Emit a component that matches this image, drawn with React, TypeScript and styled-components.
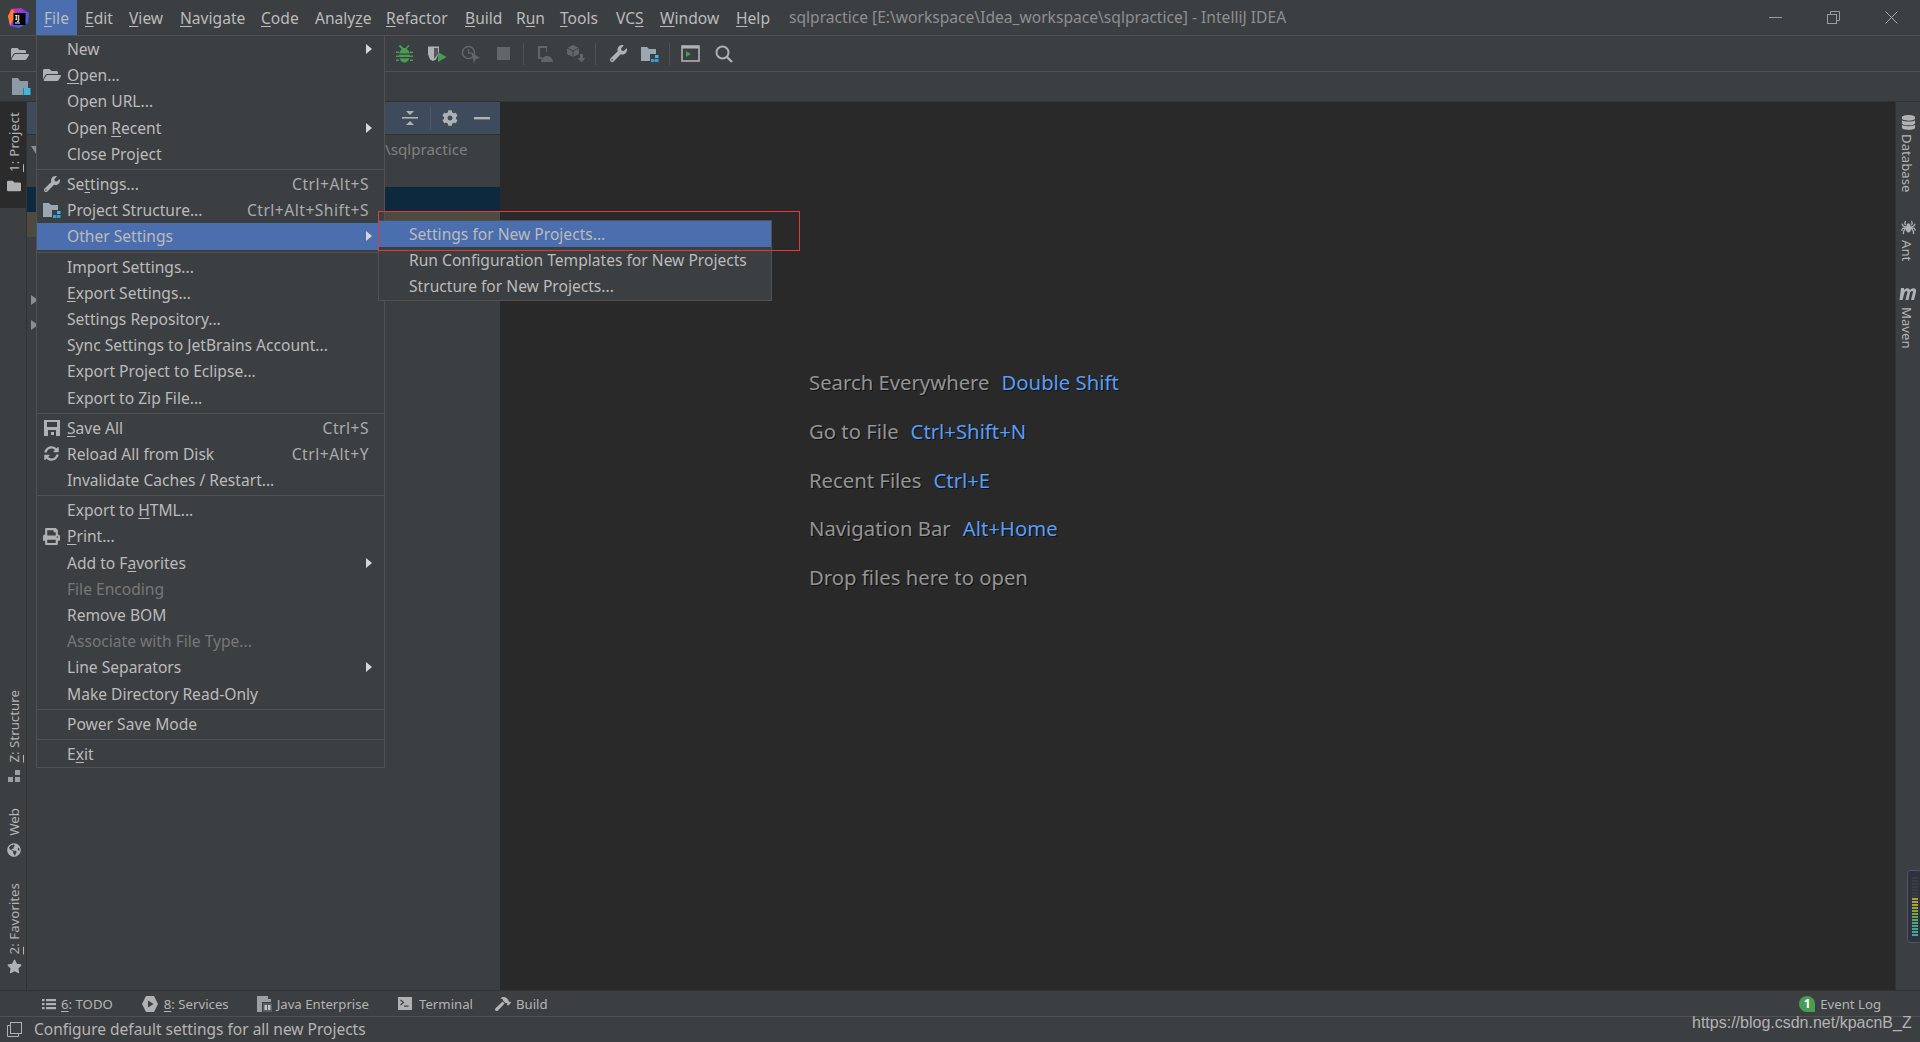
import React from "react";
import styled, { createGlobalStyle } from "styled-components";
import { FaCog, FaDatabase, FaFolder, FaFolderOpen, FaGlobeAmericas, FaHammer, FaPrint, FaStar, FaSyncAlt, FaWrench, FaSpider } from "react-icons/fa";

const Global = createGlobalStyle`
  html, body { margin: 0; padding: 0; background: #3c3f41; overflow: hidden; }
  body { font-family: "Noto Sans", "Open Sans", sans-serif; }
  u { text-underline-offset: 2px; text-decoration-thickness: 1px; }
`;

const Page = styled.div`
  position: relative;
  width: 1920px;
  height: 1042px;
  display: flex;
  flex-direction: column;
  background: #3c3f41;
  color: #bbbbbb;
  overflow: hidden;
`;

const TitleBar = styled.div`
  height: 35px;
  flex: none;
  display: flex;
  align-items: stretch;
  border-bottom: 1px solid #515151;
`;
const LogoSlot = styled.div`
  width: 36px;
  flex: none;
  display: flex;
  align-items: center;
  padding-left: 8px;
  box-sizing: border-box;
`;
const MainMenuItem = styled.div<{ $w: number; $active?: boolean }>`
  width: ${(p) => p.$w}px;
  flex: none;
  box-sizing: border-box;
  padding-left: 8px;
  font-size: 15.6px;
  line-height: 36px;
  white-space: nowrap;
  background: ${(p) => (p.$active ? "#4b6eaf" : "transparent")};
`;
const WindowTitle = styled.div`
  margin-left: 5px;
  font-size: 15.6px;
  line-height: 35px;
  color: #8d8f91;
  white-space: nowrap;
`;
const WindowControls = styled.div`
  margin-left: auto;
  display: flex;
`;
const WindowButton = styled.div`
  width: 58px;
  display: flex;
  align-items: center;
  justify-content: center;
`;

const Toolbar = styled.div`
  height: 35px;
  flex: none;
  display: flex;
  align-items: center;
  border-bottom: 1px solid #515151;
  padding-left: 8px;
`;
const ToolButton = styled.div<{ $w?: number }>`
  width: ${(p) => p.$w ?? 32}px;
  height: 26px;
  flex: none;
  display: flex;
  align-items: center;
  justify-content: center;
  color: #afb1b3;
`;
const ToolSep = styled.div<{ $ml: number; $mr: number }>`
  width: 1px;
  height: 22px;
  background: #515151;
  margin: 0 ${(p) => p.$mr}px 0 ${(p) => p.$ml}px;
`;
const ToolSpacer = styled.div`
  width: 356px;
  flex: none;
`;

const NavBar = styled.div`
  height: 29px;
  flex: none;
  display: flex;
  align-items: center;
  padding-left: 12px;
  border-bottom: 1px solid #323232;
`;

const Main = styled.div`
  flex: 1;
  min-height: 0;
  display: flex;
`;
const LeftStripe = styled.div`
  width: 26px;
  flex: none;
  display: flex;
  flex-direction: column;
  justify-content: space-between;
  border-right: 1px solid #323232;
  padding-bottom: 16px;
`;
const StripeGroup = styled.div`
  display: flex;
  flex-direction: column;
`;
const LeftTab = styled.div<{ $active?: boolean; $mt?: number; $gap?: number }>`
  display: flex;
  flex-direction: column;
  align-items: center;
  gap: ${(p) => p.$gap ?? 7}px;
  margin-top: ${(p) => p.$mt ?? 0}px;
  padding: ${(p) => (p.$active ? "10px 0 15px 2px" : "0 0 0 2px")};
  background: ${(p) => (p.$active ? "#2b2b2b" : "transparent")};
  color: #afb1b3;
`;
const VerticalLeft = styled.span<{ $spread?: boolean }>`
  writing-mode: vertical-rl;
  transform: rotate(180deg);
  font-size: 13.3px;
  line-height: 17px;
  letter-spacing: ${(p) => (p.$spread ? "0.2px" : "0")};
  color: #b4b4b4;
  white-space: nowrap;
`;

const ProjectPanel = styled.div`
  width: 473px;
  flex: none;
  display: flex;
  flex-direction: column;
`;
const PanelHeader = styled.div`
  height: 33px;
  flex: none;
  background: #3d4b5c;
  border-bottom: 1px solid #323232;
  box-sizing: border-box;
  display: flex;
  align-items: center;
  justify-content: flex-end;
  padding-right: 2px;
  margin-bottom: 2px;
  color: #afb1b3;
`;
const HeaderButton = styled.div<{ $w: number }>`
  width: ${(p) => p.$w}px;
  display: flex;
  justify-content: center;
`;
const HeaderSep = styled.div`
  width: 1px;
  height: 24px;
  background: #4d5a6a;
  margin: 0 3px;
`;
const TreeRow = styled.div<{ $tone?: "selected" | "recent" }>`
  height: 25px;
  flex: none;
  display: flex;
  align-items: center;
  padding-left: 4px;
  font-size: 15.2px;
  color: #808080;
  background: ${(p) => (p.$tone === "selected" ? "#0d293e" : p.$tone === "recent" ? "#4e4a3f" : "transparent")};
`;
const TreeText = styled.span`
  margin: -1px 0 0 344px;
  white-space: nowrap;
`;
const Caret = styled.span<{ $down?: boolean }>`
  width: 0;
  height: 0;
  flex: none;
  ${(p) =>
    p.$down
      ? "border-left: 5px solid transparent; border-right: 5px solid transparent; border-top: 8px solid #8c8f91;"
      : "border-top: 5px solid transparent; border-bottom: 5px solid transparent; border-left: 7px solid #8c8f91;"}
`;

const Editor = styled.div`
  flex: 1;
  min-width: 0;
  background: #292929;
  padding: 265px 0 0 309px;
  box-sizing: border-box;
  border-right: 1px solid #323232;
`;
const HintRow = styled.div`
  height: 48.8px;
  font-size: 20.3px;
  line-height: 30px;
  color: #949494;
  text-shadow: 1px 1px 0 #111;
  white-space: nowrap;
`;
const HintKey = styled.span`
  color: #589df6;
  margin-left: 12px;
`;

const RightStripe = styled.div`
  width: 24px;
  flex: none;
  display: flex;
  flex-direction: column;
  align-items: center;
  padding-top: 13px;
`;
const RightTab = styled.div<{ $mt?: number; $gap: number }>`
  display: flex;
  flex-direction: column;
  align-items: center;
  gap: ${(p) => p.$gap}px;
  margin-top: ${(p) => p.$mt ?? 0}px;
  color: #afb1b3;
`;
const VerticalRight = styled.span`
  writing-mode: vertical-rl;
  font-size: 13.2px;
  line-height: 17px;
  margin-right: 3px;
  color: #b4b4b4;
  white-space: nowrap;
`;
const MemoryIndicator = styled.div`
  margin-top: auto;
  margin-bottom: 47px;
  align-self: flex-end;
  line-height: 0;
`;

const BottomStripe = styled.div`
  height: 27px;
  flex: none;
  box-sizing: border-box;
  border-top: 1px solid #323232;
  border-bottom: 1px solid #515151;
  display: flex;
  align-items: center;
  position: relative;
`;
const BottomTab = styled.div<{ $x: number; $gap: number }>`
  margin-left: ${(p) => p.$x}px;
  display: flex;
  align-items: center;
  gap: ${(p) => p.$gap}px;
  font-size: 13.2px;
  color: #b4b4b4;
  white-space: nowrap;
`;
const EventLog = styled.div`
  margin-left: auto;
  margin-right: 39px;
  display: flex;
  align-items: center;
  gap: 5px;
  font-size: 13.2px;
  color: #b4b4b4;
`;
const Badge = styled.span`
  width: 16px;
  height: 16px;
  border-radius: 50% 50% 0 50%;
  background: #499c54;
  color: #fff;
  font-size: 12px;
  font-weight: 700;
  display: flex;
  align-items: center;
  justify-content: center;
`;

const StatusBar = styled.div`
  height: 24px;
  padding-bottom: 1px;
  flex: none;
  display: flex;
  align-items: center;
  padding-left: 7px;
  gap: 12px;
  font-size: 15.5px;
  color: #b4b4b4;
`;
const Watermark = styled.div`
  position: absolute;
  left: 1692px;
  top: 1013px;
  font-family: "Liberation Sans", Arial, sans-serif;
  font-size: 16px;
  line-height: 20px;
  color: #b3b3b3;
  white-space: nowrap;
`;

const Menu = styled.div<{ $x: number; $y: number; $w: number }>`
  position: absolute;
  left: ${(p) => p.$x}px;
  top: ${(p) => p.$y}px;
  width: ${(p) => p.$w}px;
  box-sizing: border-box;
  background: #3c3f41;
  border: 1px solid #515151;
  border-top-width: 0;
  z-index: 2;
`;
const SubMenu = styled(Menu)`
  border-width: 1px;
  z-index: 3;
`;
const MenuRow = styled.div<{ $active?: boolean; $disabled?: boolean; $indent: number }>`
  height: 26.2px;
  box-sizing: border-box;
  display: flex;
  align-items: center;
  position: relative;
  padding: 0 12px 0 ${(p) => p.$indent}px;
  font-size: 15.6px;
  color: ${(p) => (p.$disabled ? "#777777" : "#bbbbbb")};
  background: ${(p) => (p.$active ? "#4b6eaf" : "transparent")};
  white-space: nowrap;
`;
const RowIcon = styled.span`
  position: absolute;
  left: 5.5px;
  top: 50%;
  transform: translateY(-50%);
  width: 18px;
  height: 18px;
  display: flex;
  align-items: center;
  justify-content: center;
  color: #afb1b3;
`;
const Shortcut = styled.span`
  margin-left: auto;
  margin-right: 3px;
  letter-spacing: 0.5px;
  color: #a9acae;
`;
const SubArrow = styled.span`
  margin-left: auto;
  width: 0;
  height: 0;
  border-top: 5.5px solid transparent;
  border-bottom: 5.5px solid transparent;
  border-left: 6px solid #d6d6d6;
`;
const MenuSep = styled.div`
  height: 2px;
  border-bottom: 1px solid #515151;
  margin-bottom: 1px;
`;
const RedMark = styled.div`
  position: absolute;
  left: 378px;
  top: 211px;
  width: 422px;
  height: 40px;
  box-sizing: border-box;
  border: 1px solid #e5383b;
  z-index: 4;
`;

const Logo = () => (
  <svg width="21" height="20" viewBox="0 0 21 20">
    <defs>
      <linearGradient id="lg" x1="0" y1="0" x2="1" y2="1">
        <stop offset="0" stopColor="#fc318c" />
        <stop offset="0.5" stopColor="#7b3fe0" />
        <stop offset="1" stopColor="#087cfa" />
      </linearGradient>
    </defs>
    <path d="M3 1 L13 0 L21 5 L20 15 L11 20 L2 18 L0 8 Z" fill="url(#lg)" />
    <path d="M0 8 L4 1 L8 6 L2 18 Z" fill="#fe7f2d" />
    <rect x="5.500" y="5" width="12" height="12" fill="#000" />
    <text x="7" y="11.500" fontSize="6.5" fontWeight="700" fill="#fff" fontFamily="Noto Sans">IJ</text>
    <rect x="7" y="14.500" width="5" height="1" fill="#fff" />
  </svg>
);
const ProjectStructure = () => (
  <svg width="18" height="16" viewBox="0 0 18 16">
    <path d="M0 1h6l2 2h7v5H9v7H0z" fill="#9aa7b0" />
    <rect x="14" y="9" width="3.500" height="3" fill="#40b6e0" />
    <rect x="10" y="13" width="3.500" height="3" fill="#389fd6" />
    <rect x="14" y="13" width="3.500" height="3" fill="#389fd6" />
  </svg>
);
const ModuleFolder = () => (
  <svg width="19" height="17" viewBox="0 0 19 17">
    <path d="M0 0h6l2 3h8v7h-5v7H0z" fill="#8a9aa6" />
    <rect x="11.500" y="10" width="7" height="7" fill="#40b6e0" />
  </svg>
);
const BugIcon = () => (
  <svg width="17" height="18" viewBox="0 0 17 18" fill="#499c54">
    <ellipse cx="8.500" cy="10.500" rx="5.500" ry="7" />
    <path d="M4.500 0l3 3h2l3-3 1 1-3 3v2h-5V4l-3-3z" />
    <path d="M0 6.500h3V8H0zM14 6.500h3V8h-3zM0 10.500h3V12H0zM14 10.500h3V12h-3zM0 14.500h3V16H0zM14 14.500h3V16h-3z" />
    <rect x="3" y="8.500" width="11" height="1.300" fill="#3c3f41" />
    <rect x="3" y="12" width="11" height="1.300" fill="#3c3f41" />
  </svg>
);
const CoverageIcon = () => (
  <svg width="19" height="18" viewBox="0 0 19 18">
    <path d="M0 1.500h11v6l-3 7-3 1.500-3-1.500-2-5z" fill="#afb1b3" />
    <path d="M6 3h4v6l-4 5z" fill="#55585a" />
    <path d="M10 7l8.500 5-8.500 5z" fill="#499c54" />
  </svg>
);
const ProfilerIcon = () => (
  <svg width="20" height="18" viewBox="0 0 20 18" fill="none">
    <circle cx="7.5" cy="7.5" r="6" stroke="#636668" strokeWidth="1.6" />
    <path d="M7.5 4v4h3" stroke="#636668" strokeWidth="1.4" />
    <path d="M10 7l9 6-4 1-2 4z" fill="#636668" />
  </svg>
);
const BuildDim = () => (
  <svg width="18" height="18" viewBox="0 0 18 18" fill="none">
    <path d="M2 1h9v6H10V3H4v9h2v2H2z" fill="#636668" />
    <path d="M5 17c.5-4 3-6 6-6s5.500 2 6 6z" fill="#636668" />
  </svg>
);
const CubeDim = () => (
  <svg width="20" height="18" viewBox="0 0 20 18">
    <path d="M7 0l6 3v6l-6 3-6-3V3z" fill="#636668" />
    <path d="M7 6v6M1 3l6 3 6-3" stroke="#3c3f41" strokeWidth="1" fill="none" />
    <path d="M14 9h3v4h2.500l-4 4.500-4-4.500H14z" fill="#636668" />
  </svg>
);
const RunAnything = () => (
  <svg width="19" height="17" viewBox="0 0 19 17" fill="none">
    <rect x="1" y="1" width="17" height="15" stroke="#afb1b3" strokeWidth="1.6" />
    <rect x="1" y="1" width="17" height="2.500" fill="#afb1b3" />
    <path d="M5 6l5 3-5 3z" fill="#499c54" />
  </svg>
);
const SearchIcon = () => (
  <svg width="18" height="18" viewBox="0 0 18 18" fill="none" stroke="#afb1b3">
    <circle cx="7.500" cy="7.500" r="6" strokeWidth="2" />
    <path d="M11.500 11.500l5.500 5.500" strokeWidth="2.400" />
  </svg>
);
const SaveIcon = () => (
  <svg width="16" height="16" viewBox="0 0 16 16">
    <rect width="16" height="16" fill="#afb1b3" />
    <rect x="3" y="2" width="10" height="5" fill="#3c3f41" />
    <rect x="4" y="10" width="8" height="6" fill="#3c3f41" />
    <rect x="7" y="12" width="3" height="3" fill="#afb1b3" />
  </svg>
);
const CollapseIcon = () => (
  <svg width="16" height="16" viewBox="0 0 16 16">
    <path d="M4 1h8l-4 4z" fill="#afb1b3" />
    <rect x="0" y="7" width="16" height="1.600" fill="#afb1b3" />
    <path d="M8 11l4 4H4z" fill="#afb1b3" />
  </svg>
);
const MinusIcon = () => (
  <svg width="16" height="3" viewBox="0 0 16 3"><rect width="16" height="2.400" fill="#afb1b3" /></svg>
);
const WinMin = () => (
  <svg width="13" height="2" viewBox="0 0 13 2"><rect width="13" height="1" fill="#9a9c9e" /></svg>
);
const WinRestore = () => (
  <svg width="13" height="13" viewBox="0 0 13 13" fill="none" stroke="#9a9c9e">
    <rect x="0.500" y="3.500" width="9" height="9" />
    <path d="M3.500 3.500v-3h9v9h-3" />
  </svg>
);
const WinClose = () => (
  <svg width="13" height="13" viewBox="0 0 13 13" stroke="#a5a7a9"><path d="M0.500 0.500l12 12M12.500 0.500l-12 12" /></svg>
);
const TodoIcon = () => (
  <svg width="14" height="12" viewBox="0 0 14 12" fill="#afb1b3">
    <rect y="1" width="2.500" height="2.200" /><rect x="4" y="1" width="10" height="2.200" />
    <rect y="5" width="2.500" height="2.200" /><rect x="4" y="5" width="10" height="2.200" />
    <rect y="9" width="2.500" height="2.200" /><rect x="4" y="9" width="10" height="2.200" />
  </svg>
);
const ServicesIcon = () => (
  <svg width="16" height="16" viewBox="0 0 16 16">
    <path d="M4 0h8l4 8-4 8H4L0 8z" fill="#afb1b3" />
    <path d="M6 4.500l5.500 3.500L6 11.500z" fill="#3c3f41" />
  </svg>
);
const JavaEEIcon = () => (
  <svg width="15" height="16" viewBox="0 0 15 16">
    <path d="M0 0h11v3h3v3H5v10H0z" fill="#9da0a2" />
    <rect x="6" y="7" width="9" height="9" fill="#5a5d5f" />
    <rect x="7.500" y="9" width="2.500" height="5" fill="#c0c2c4" /><rect x="11" y="9" width="2.500" height="5" fill="#c0c2c4" />
  </svg>
);
const TerminalIcon = () => (
  <svg width="14" height="13" viewBox="0 0 14 13">
    <rect width="14" height="13" fill="#afb1b3" />
    <path d="M2.500 3l3 2.500-3 2.500" stroke="#3c3f41" strokeWidth="1.200" fill="none" />
    <rect x="6" y="8.500" width="4.500" height="1.200" fill="#3c3f41" />
  </svg>
);
const StructureIcon = () => (
  <svg width="12" height="12" viewBox="0 0 12 12" fill="#9da0a2">
    <rect x="7" y="0" width="5" height="5" /><rect x="0" y="7" width="5" height="5" /><rect x="7" y="7" width="5" height="5" />
  </svg>
);
const MavenIcon = () => (
  <svg width="18" height="12" viewBox="0 0 18 12" fill="#afb1b3">
    <path d="M2 0h3v2c2-2.500 5-2.500 6 0 2-2.500 7-2.500 6 2l-2 8h-3l2-8c0-1.500-2-1-3 .5L9.500 12h-3l2-8c0-1.500-2-1-3 .5L3.500 12h-3z" />
  </svg>
);
const StatusToggle = () => (
  <svg width="15" height="15" viewBox="0 0 15 15" fill="none" stroke="#afb1b3">
    <rect x="3.500" y="0.500" width="11" height="11" />
    <path d="M3.500 3.500H0.500v11h11v-3" />
  </svg>
);
const Memory = () => {
  const dark = Array.from({ length: 7 }, () => "#3a3d40");
  const lit = ["#b89b2e","#b2a02f","#a8a431","#9aa535","#8ba43b","#7aa545","#66a552","#58a762","#4fa773","#47a784","#44a894","#44a894","#3fa89c"];
  return (
    <svg width="13" height="73" viewBox="0 0 13 73">
      <rect x="0.500" y="0.500" width="14" height="72" rx="3" fill="#2d3140" stroke="#50566a" />
      {[...dark, ...lit].map((c, i) => (
        <rect key={i} x="5" y={7 + i * 3} width="6" height="2" fill={c} />
      ))}
    </svg>
  );
};

type Row =
  | { sep: true }
  | { label: React.ReactNode; icon?: React.ReactNode; shortcut?: string; sub?: boolean; active?: boolean; disabled?: boolean };

const fileMenu: Row[] = [
  { label: "New", sub: true },
  { label: <><u>O</u>pen...</>, icon: <FaFolderOpen size={18} /> },
  { label: "Open URL..." },
  { label: <>Open <u>R</u>ecent</>, sub: true },
  { label: "Close Project" },
  { sep: true },
  { label: <>Se<u>t</u>tings...</>, icon: <FaWrench size={16} />, shortcut: "Ctrl+Alt+S" },
  { label: "Project Structure...", icon: <ProjectStructure />, shortcut: "Ctrl+Alt+Shift+S" },
  { label: "Other Settings", sub: true, active: true },
  { sep: true },
  { label: "Import Settings..." },
  { label: <><u>E</u>xport Settings...</> },
  { label: "Settings Repository..." },
  { label: "Sync Settings to JetBrains Account..." },
  { label: "Export Project to Eclipse..." },
  { label: "Export to Zip File..." },
  { sep: true },
  { label: <><u>S</u>ave All</>, icon: <SaveIcon />, shortcut: "Ctrl+S" },
  { label: "Reload All from Disk", icon: <FaSyncAlt size={15} />, shortcut: "Ctrl+Alt+Y" },
  { label: "Invalidate Caches / Restart..." },
  { sep: true },
  { label: <>Export to <u>H</u>TML...</> },
  { label: <><u>P</u>rint...</>, icon: <FaPrint size={17} /> },
  { label: <>Add to F<u>a</u>vorites</>, sub: true },
  { label: "File Encoding", disabled: true },
  { label: "Remove BOM" },
  { label: "Associate with File Type...", disabled: true },
  { label: "Line Separators", sub: true },
  { label: "Make Directory Read-Only" },
  { sep: true },
  { label: "Power Save Mode" },
  { sep: true },
  { label: <>E<u>x</u>it</> },
];

const subMenu: Row[] = [
  { label: "Settings for New Projects...", active: true },
  { label: "Run Configuration Templates for New Projects" },
  { label: "Structure for New Projects..." },
];

const mainMenu: [React.ReactNode, number][] = [
  [<><u>F</u>ile</>, 41],
  [<><u>E</u>dit</>, 44],
  [<><u>V</u>iew</>, 51],
  [<><u>N</u>avigate</>, 81],
  [<><u>C</u>ode</>, 54],
  [<>Analy<u>z</u>e</>, 71],
  [<><u>R</u>efactor</>, 79],
  [<><u>B</u>uild</>, 51],
  [<>R<u>u</u>n</>, 44],
  [<><u>T</u>ools</>, 56],
  [<>VC<u>S</u></>, 44],
  [<><u>W</u>indow</>, 76],
  [<><u>H</u>elp</>, 56],
];

const renderRows = (rows: Row[], indent: number) =>
  rows.map((r, i) =>
    "sep" in r ? (
      <MenuSep key={i} />
    ) : (
      <MenuRow key={i} $active={r.active} $disabled={r.disabled} $indent={indent}>
        {r.icon && <RowIcon>{r.icon}</RowIcon>}
        <span>{r.label}</span>
        {r.shortcut && <Shortcut>{r.shortcut}</Shortcut>}
        {r.sub && <SubArrow />}
      </MenuRow>
    )
  );

const hints: [string, string | null][] = [
  ["Search Everywhere", "Double Shift"],
  ["Go to File", "Ctrl+Shift+N"],
  ["Recent Files", "Ctrl+E"],
  ["Navigation Bar", "Alt+Home"],
  ["Drop files here to open", null],
];

export default function App() {
  return (
    <Page>
      <Global />
      <TitleBar>
        <LogoSlot><Logo /></LogoSlot>
        {mainMenu.map(([label, w], i) => (
          <MainMenuItem key={i} $w={w} $active={i === 0}>{label}</MainMenuItem>
        ))}
        <WindowTitle>sqlpractice [E:\workspace\Idea_workspace\sqlpractice] - IntelliJ IDEA</WindowTitle>
        <WindowControls>
          <WindowButton><WinMin /></WindowButton>
          <WindowButton><WinRestore /></WindowButton>
          <WindowButton><WinClose /></WindowButton>
        </WindowControls>
      </TitleBar>

      <Toolbar>
        <ToolButton $w={24}><FaFolderOpen size={18} /></ToolButton>
        <ToolSpacer />
        <ToolButton $w={33}><BugIcon /></ToolButton>
        <ToolButton $w={33}><CoverageIcon /></ToolButton>
        <ToolButton $w={33}><ProfilerIcon /></ToolButton>
        <ToolButton $w={32}><svg width="13" height="13"><rect width="13" height="13" fill="#636668" /></svg></ToolButton>
        <ToolSep $ml={4} $mr={5} />
        <ToolButton $w={31}><BuildDim /></ToolButton>
        <ToolButton $w={31}><CubeDim /></ToolButton>
        <ToolSep $ml={4} $mr={6} />
        <ToolButton><FaWrench size={17} /></ToolButton>
        <ToolButton><ProjectStructure /></ToolButton>
        <ToolSep $ml={3} $mr={4} />
        <ToolButton $w={33}><RunAnything /></ToolButton>
        <ToolButton $w={33}><SearchIcon /></ToolButton>
      </Toolbar>

      <NavBar><ModuleFolder /></NavBar>

      <Main>
        <LeftStripe>
          <StripeGroup>
            <LeftTab $active>
              <VerticalLeft $spread><u>1</u>: Project</VerticalLeft>
              <FaFolder size={14} />
            </LeftTab>
          </StripeGroup>
          <StripeGroup>
            <LeftTab>
              <VerticalLeft><u>Z</u>: Structure</VerticalLeft>
              <StructureIcon />
            </LeftTab>
            <LeftTab $mt={26}>
              <VerticalLeft>Web</VerticalLeft>
              <FaGlobeAmericas size={14} />
            </LeftTab>
            <LeftTab $mt={26} $gap={5}>
              <VerticalLeft><u>2</u>: Favorites</VerticalLeft>
              <FaStar size={15} />
            </LeftTab>
          </StripeGroup>
        </LeftStripe>

        <ProjectPanel>
          <PanelHeader>
            <HeaderButton $w={34}><CollapseIcon /></HeaderButton>
            <HeaderSep />
            <HeaderButton $w={32}><FaCog size={16} /></HeaderButton>
            <HeaderButton $w={32}><MinusIcon /></HeaderButton>
          </PanelHeader>
          <TreeRow><Caret $down /><TreeText>\sqlpractice</TreeText></TreeRow>
          <TreeRow />
          <TreeRow $tone="selected" />
          <TreeRow $tone="recent" />
          <TreeRow />
          <TreeRow />
          <TreeRow><Caret /></TreeRow>
          <TreeRow><Caret /></TreeRow>
        </ProjectPanel>

        <Editor>
          {hints.map(([a, b]) => (
            <HintRow key={a}>{a}{b && <HintKey>{b}</HintKey>}</HintRow>
          ))}
        </Editor>

        <RightStripe>
          <RightTab $gap={4}>
            <FaDatabase size={15} />
            <VerticalRight>Database</VerticalRight>
          </RightTab>
          <RightTab $mt={28} $gap={5}>
            <FaSpider size={15} />
            <VerticalRight>Ant</VerticalRight>
          </RightTab>
          <RightTab $mt={26} $gap={7}>
            <MavenIcon />
            <VerticalRight>Maven</VerticalRight>
          </RightTab>
          <MemoryIndicator><Memory /></MemoryIndicator>
        </RightStripe>
      </Main>

      <BottomStripe>
        <BottomTab $x={42} $gap={5}><TodoIcon /><span><u>6</u>: TODO</span></BottomTab>
        <BottomTab $x={29} $gap={6}><ServicesIcon /><span><u>8</u>: Services</span></BottomTab>
        <BottomTab $x={28} $gap={5}><JavaEEIcon /><span>Java Enterprise</span></BottomTab>
        <BottomTab $x={29} $gap={7}><TerminalIcon /><span>Terminal</span></BottomTab>
        <BottomTab $x={22} $gap={5}><FaHammer size={16} /><span>Build</span></BottomTab>
        <EventLog><Badge>1</Badge><span>Event Log</span></EventLog>
      </BottomStripe>
      <StatusBar>
        <StatusToggle />
        <span>Configure default settings for all new Projects</span>
      </StatusBar>

      <Menu $x={36} $y={36} $w={349}>{renderRows(fileMenu, 30)}</Menu>
      <SubMenu $x={378} $y={220} $w={394}>{renderRows(subMenu, 30)}</SubMenu>
      <RedMark />
      <Watermark>https://blog.csdn.net/kpacnB_Z</Watermark>
    </Page>
  );
}
